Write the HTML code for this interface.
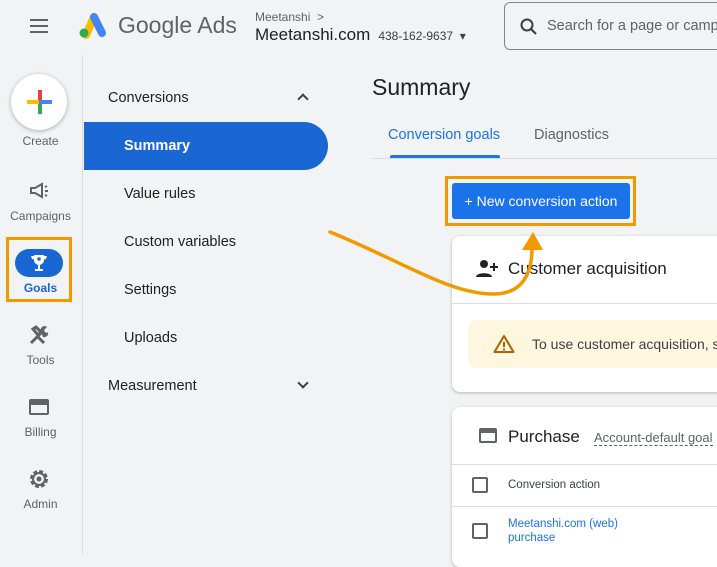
<!DOCTYPE html>
<html><head><style>
*{margin:0;padding:0;box-sizing:border-box}
body{width:717px;height:554px;overflow:hidden;background:#f1f3f4;font-family:"Liberation Sans",Arial,sans-serif;position:relative;color:#202124}
.a{position:absolute}
.rail{left:0;top:55px;width:83px;height:499px;border-right:1px solid #dadce0}
.ri{position:absolute;width:83px;text-align:center;font-size:12px;color:#5f6368}
.nav{font-size:14.5px;color:#202124}
.card{background:#fff;border-radius:8px;box-shadow:0 1px 3px rgba(0,0,0,.25)}
</style></head><body>
<!-- header -->
<div class="a" style="left:30px;top:19px;width:18px;height:2px;background:#5f6368;box-shadow:0 6px 0 #5f6368,0 12px 0 #5f6368"></div>
<svg class="a" style="left:75px;top:11px" width="32" height="28" viewBox="0 0 32 28">
<path d="M11 24 L19 6" stroke="#fbbc04" stroke-width="8" stroke-linecap="round"/>
<path d="M19 6 L27 22" stroke="#4285f4" stroke-width="8" stroke-linecap="round"/>
<circle cx="9" cy="22" r="4.5" fill="#34a853"/></svg>
<div class="a" style="left:118px;top:12px;font-size:23px;color:#5f6368">Google Ads</div>
<div class="a" style="left:255px;top:10px;font-size:12px;color:#5f6368">Meetanshi &nbsp;&gt;</div>
<div class="a" style="left:255px;top:25px;font-size:17px;color:#202124">Meetanshi.com <span style="font-size:12px;color:#3c4043">&nbsp;438-162-9637 &nbsp;▾</span></div>
<div class="a" style="left:504px;top:2px;width:230px;height:48px;border:1px solid #80868b;border-radius:6px"></div>
<svg class="a" style="left:519px;top:17px" width="20" height="20" viewBox="0 0 20 20"><circle cx="8" cy="8" r="5.5" fill="none" stroke="#3c4043" stroke-width="2"/><path d="M12 12l5 5" stroke="#3c4043" stroke-width="2.2"/></svg>
<div class="a" style="left:547px;top:18px;font-size:14.5px;color:#5f6368;white-space:nowrap">Search for a page or campaign</div>
<!-- rail -->
<div class="a rail"></div>
<div class="a" style="left:11px;top:74px;width:56px;height:56px;border-radius:50%;background:#fff;box-shadow:0 1px 4px rgba(0,0,0,.3)"></div>
<div class="a" style="left:38px;top:90px;width:4px;height:12px;background:#ea4335"></div>
<div class="a" style="left:38px;top:102px;width:4px;height:12px;background:#34a853"></div>
<div class="a" style="left:27px;top:100px;width:12px;height:4px;background:#fbbc04"></div>
<div class="a" style="left:40px;top:100px;width:12px;height:4px;background:#4285f4"></div>
<div class="ri" style="left:-1px;top:134px">Create</div>
<svg class="a" style="left:28px;top:182px" width="22" height="18" viewBox="0 0 22 18"><path d="M3 6h4l7-4v13l-7-4H3z" fill="none" stroke="#5f6368" stroke-width="2"/><path d="M17 5l2-1M17 9h3M17 13l2 1" stroke="#5f6368" stroke-width="2"/></svg>
<div class="ri" style="left:-1px;top:209px">Campaigns</div>
<div class="a" style="left:6px;top:237px;width:66px;height:65px;border:3px solid #f29900"></div>
<div class="a" style="left:15px;top:249px;width:48px;height:28px;border-radius:14px;background:#1a66d2"></div>
<svg class="a" style="left:29px;top:253px" width="20" height="20" viewBox="0 0 20 20"><path d="M5 2h10v5a5 5 0 0 1-10 0z M2 3h3v3a2 2 0 0 1-2 0z M18 3h-3v3a2 2 0 0 0 2 0z" fill="#fff"/><circle cx="10" cy="6" r="1.8" fill="#1a66d2"/><path d="M9 12h2v4h3v2H6v-2h3z" fill="#fff"/></svg>
<div class="ri" style="left:-1px;top:281px;color:#1a66d2;font-weight:bold">Goals</div>
<svg class="a" style="left:28px;top:324px" width="22" height="22" viewBox="0 0 22 22"><path d="M3 19L13 9M8 3l4 4M5 5l3-2 5 5-3 3z" stroke="#5f6368" stroke-width="3" fill="none"/><path d="M10 13l6 6" stroke="#5f6368" stroke-width="3"/><path d="M13 8a4 4 0 0 1 6-5l-3 3 1 2 2 1 1-1a4 4 0 0 1-5 5" fill="#5f6368"/></svg>
<div class="ri" style="left:-1px;top:353px">Tools</div>
<div class="a" style="left:29px;top:399px;width:20px;height:16px;border:2.5px solid #5f6368;border-radius:2px;border-top-width:6px"></div>
<div class="ri" style="left:-1px;top:425px">Billing</div>
<svg class="a" style="left:28px;top:468px" width="22" height="22" viewBox="0 0 22 22"><circle cx="11" cy="11" r="7" fill="none" stroke="#5f6368" stroke-width="4" stroke-dasharray="3.5 2"/><circle cx="11" cy="11" r="6" fill="none" stroke="#5f6368" stroke-width="2"/><circle cx="11" cy="11" r="2.5" fill="#5f6368"/></svg>
<div class="ri" style="left:-1px;top:497px">Admin</div>
<!-- nav -->
<div class="a nav" style="left:108px;top:90px">Conversions</div>
<div class="a" style="left:299px;top:95px;width:8px;height:8px;border-left:2px solid #3c4043;border-top:2px solid #3c4043;transform:rotate(45deg)"></div>
<div class="a" style="left:84px;top:122px;width:244px;height:48px;background:#1a66d2;border-radius:0 24px 24px 0"></div>
<div class="a nav" style="left:124px;top:138px;color:#fff;font-weight:bold">Summary</div>
<div class="a nav" style="left:124px;top:186px">Value rules</div>
<div class="a nav" style="left:124px;top:234px">Custom variables</div>
<div class="a nav" style="left:124px;top:282px">Settings</div>
<div class="a nav" style="left:124px;top:330px">Uploads</div>
<div class="a nav" style="left:108px;top:378px">Measurement</div>
<div class="a" style="left:299px;top:379px;width:8px;height:8px;border-right:2px solid #3c4043;border-bottom:2px solid #3c4043;transform:rotate(45deg)"></div>
<!-- content -->
<div class="a" style="left:372px;top:74px;font-size:23px">Summary</div>
<div class="a" style="left:388px;top:127px;font-size:14.5px;color:#1a73e8">Conversion goals</div>
<div class="a" style="left:534px;top:127px;font-size:14.5px;color:#5f6368">Diagnostics</div>
<div class="a" style="left:372px;top:158px;width:345px;height:1px;background:#dadce0"></div>
<div class="a" style="left:390px;top:155px;width:110px;height:3px;background:#1a73e8;border-radius:2px 2px 0 0"></div>
<div class="a" style="left:445px;top:176px;width:191px;height:50px;border:3px solid #f29900"></div>
<div class="a" style="left:452px;top:183px;width:178px;height:36px;background:#1a73e8;border-radius:3px;color:#fff;font-size:14px;line-height:36px;text-align:center">+ New conversion action</div>
<div class="a card" style="left:452px;top:236px;width:290px;height:156px"></div>
<svg class="a" style="left:476px;top:259px" width="24" height="20" viewBox="0 0 24 20"><circle cx="8" cy="5" r="4" fill="#202124"/><path d="M0 18c0-5 16-5 16 0z" fill="#202124"/><path d="M18 4v8M14 8h8" stroke="#202124" stroke-width="2"/></svg>
<div class="a" style="left:508px;top:259px;font-size:17px">Customer acquisition</div>
<div class="a" style="left:452px;top:303px;width:265px;height:1px;background:#dadce0"></div>
<div class="a" style="left:468px;top:320px;width:260px;height:48px;background:#fef7e0;border-radius:8px"></div>
<svg class="a" style="left:493px;top:334px" width="22" height="20" viewBox="0 0 22 20"><path d="M11 2L1.5 18h19z" fill="none" stroke="#b06000" stroke-width="2" stroke-linejoin="round"/><path d="M11 8v5M11 14.5v2" stroke="#b06000" stroke-width="2"/></svg>
<div class="a" style="left:532px;top:336px;font-size:14px;color:#3c4043;white-space:nowrap">To use customer acquisition, set up</div>
<div class="a card" style="left:452px;top:407px;width:290px;height:160px"></div>
<div class="a" style="left:479px;top:428px;width:18px;height:15px;border:2.5px solid #5f6368;border-top-width:5px;border-radius:2px"></div>
<div class="a" style="left:508px;top:427px;font-size:17px">Purchase</div>
<div class="a" style="left:594px;top:430px;font-size:13px;color:#5f6368;border-bottom:1px dashed #5f6368;white-space:nowrap">Account-default goal</div>
<div class="a" style="left:452px;top:464px;width:265px;height:1px;background:#dadce0"></div>
<div class="a" style="left:472px;top:477px;width:16px;height:16px;border:2px solid #5f6368;border-radius:2px"></div>
<div class="a" style="left:508px;top:479px;font-size:11.5px;color:#3c4043">Conversion action</div>
<div class="a" style="left:452px;top:506px;width:265px;height:1px;background:#dadce0"></div>
<div class="a" style="left:472px;top:523px;width:16px;height:16px;border:2px solid #5f6368;border-radius:2px"></div>
<div class="a" style="left:508px;top:517px;font-size:11.5px;color:#1a73e8;line-height:14px">Meetanshi.com (web)<br>purchase</div>
<!-- arrow -->
<svg class="a" style="left:0;top:0" width="717" height="554"><path d="M330 232 C400 260 450 295 495 294 C525 293 532 270 532 248" fill="none" stroke="#f29900" stroke-width="3.5" stroke-linecap="round"/><path d="M522 250 L533 232 L543 250z" fill="#f29900"/></svg>
</body></html>
